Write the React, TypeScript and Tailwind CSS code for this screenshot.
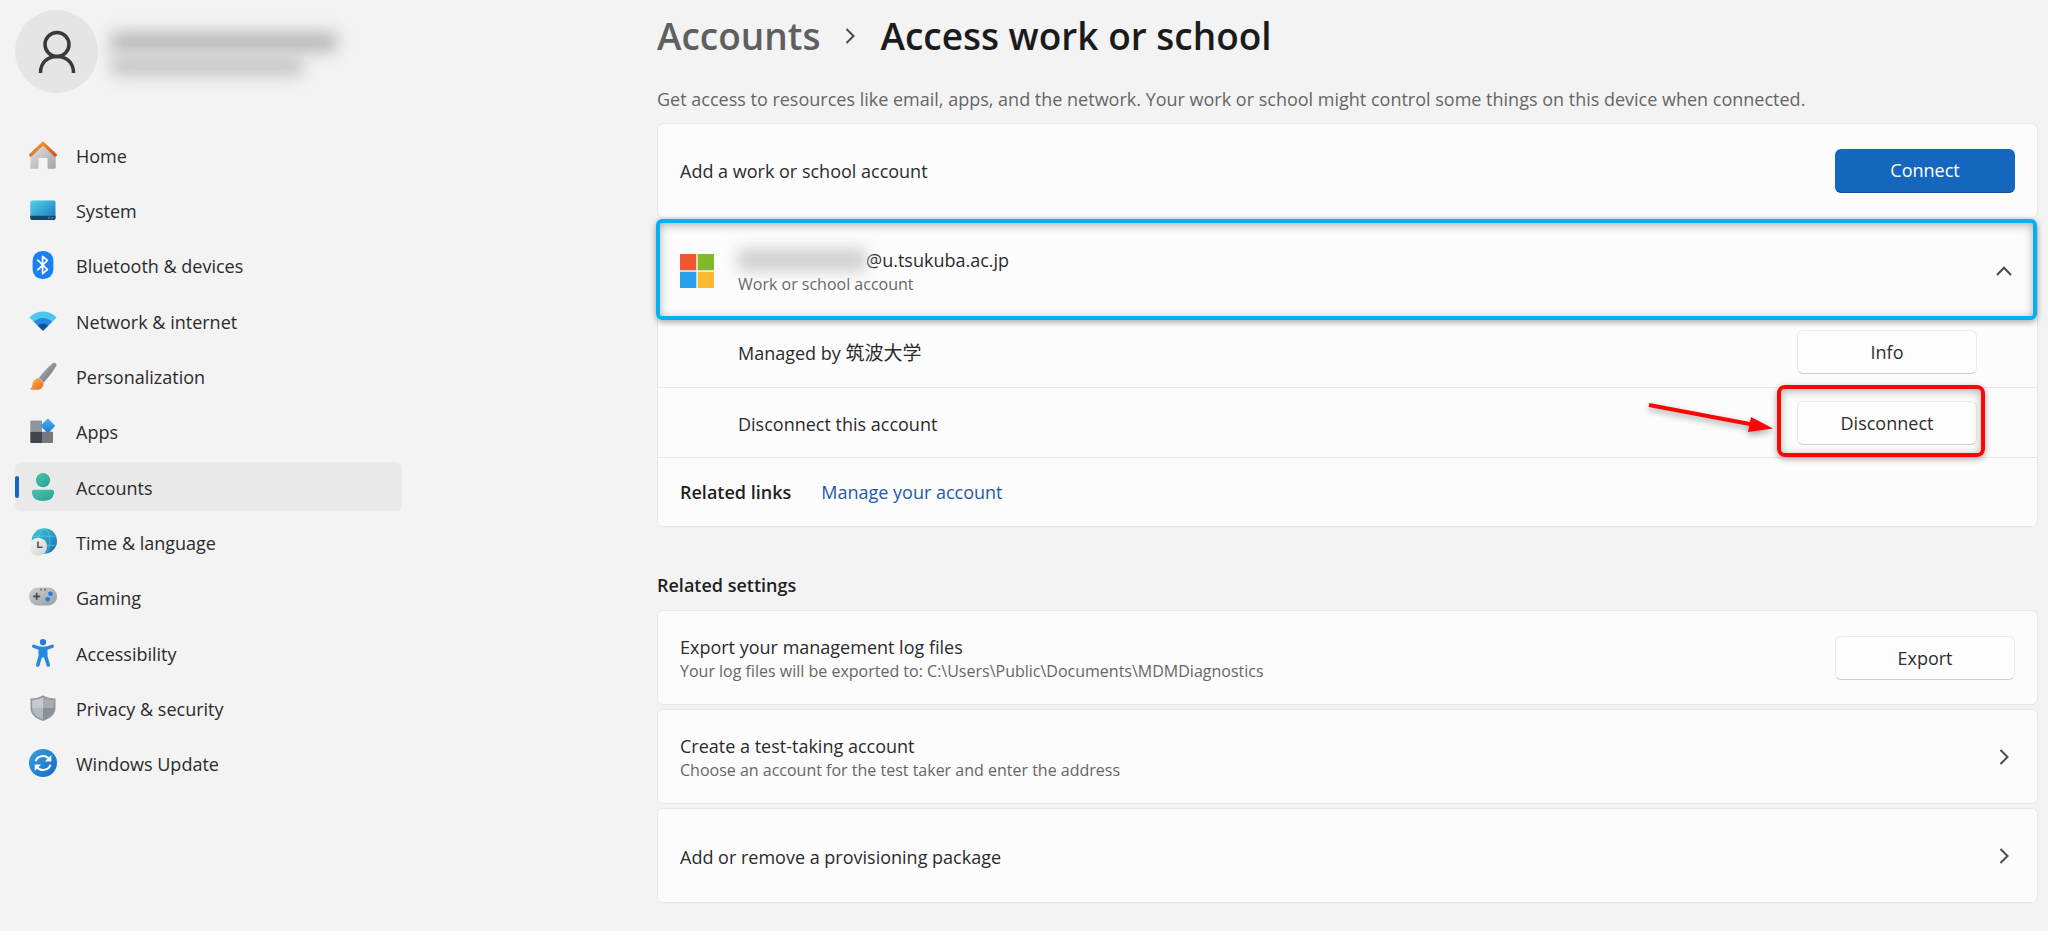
import type { ReactNode } from "react";

const HomeIcon = () => (
    <svg viewBox="0 0 28 28" className="w-7 h-7">
        <defs>
            <linearGradient id="homeBody" x1="0" y1="0" x2="1" y2="1">
                <stop offset="0" stopColor="#e4e4e4" />
                <stop offset="1" stopColor="#a3a3a3" />
            </linearGradient>
            <linearGradient id="homeRoof" x1="0" y1="0" x2="1" y2="1">
                <stop offset="0" stopColor="#f2a331" />
                <stop offset="1" stopColor="#d8501c" />
            </linearGradient>
        </defs>
        <path
            d="M14 3.500L1.300 14.500V26.400c0 .9.6 1.400 1.400 1.400h5.800c.6 0 1-.4 1-1v-9.900h9v9.900c0 .6.4 1 1 1h5.800c.8 0 1.400-.5 1.400-1.400V14.500z"
            fill="url(#homeBody)"
        />
        <path
            d="M1.700 14L14 2.300 26.300 14"
            fill="none"
            stroke="url(#homeRoof)"
            strokeWidth="3.200"
            strokeLinecap="round"
            strokeLinejoin="round"
        />
    </svg>
);

const SystemIcon = () => (
    <svg viewBox="0 0 28 28" className="w-7 h-7">
        <defs>
            <linearGradient id="sysScreen" x1="0" y1="0" x2="1" y2="1">
                <stop offset="0" stopColor="#4fd3e6" />
                <stop offset="1" stopColor="#1b74c5" />
            </linearGradient>
        </defs>
        <rect x="1.3" y="4.5" width="25.2" height="19.6" rx="2" fill="url(#sysScreen)" />
        <path d="M1.3 19.8h25.2v2.3a2 2 0 0 1-2 2H3.300a2 2 0 0 1-2-2z" fill="#14496f" />
        <path d="M19.500 21.900h1.300M22.500 21.900h1.300" stroke="#7fb2d4" strokeWidth="1.200" />
    </svg>
);

const BluetoothIcon = () => (
    <svg viewBox="0 0 28 28" className="w-7 h-7">
        <rect x="3.600" y="0" width="20.800" height="28" rx="9.500" fill="#1a80f5" />
        <path
            d="M8.800 9.200l9.600 9.400-4.800 4V5.400l4.800 4-9.600 9.400"
            fill="none"
            stroke="#fff"
            strokeWidth="1.700"
            strokeLinejoin="round"
            strokeLinecap="round"
        />
    </svg>
);

const NetworkIcon = () => (
    <svg viewBox="0 0 28 28" className="w-7 h-7">
        <path d="M14 23.800L.4 10.400C8 2.500 20 2.500 27.600 10.400z" fill="#4cc8ee" />
        <path d="M14 23.800L4.900 14.800c5-5.200 13.200-5.200 18.200 0z" fill="#2788dd" />
        <path d="M14 23.800L8.900 18.700c2.900-2.900 7.300-2.900 10.200 0z" fill="#154f9f" />
    </svg>
);

const PersonalizationIcon = () => (
    <svg viewBox="0 0 28 28" className="w-7 h-7">
        <defs>
            <linearGradient id="brushHandle" x1="0" y1="0" x2="1" y2="1">
                <stop offset="0" stopColor="#b4babf" />
                <stop offset="1" stopColor="#666c73" />
            </linearGradient>
            <linearGradient id="brushTip" x1="0" y1="0" x2="1" y2="1">
                <stop offset="0" stopColor="#fdbe4b" />
                <stop offset="1" stopColor="#e8621c" />
            </linearGradient>
        </defs>
        <path
            d="M23.600 1.200c2-1.600 4.900.6 3.600 2.900-3.400 5.600-7.800 11.300-12.400 16.300l-5-4.400C14 10.800 18.600 5.200 23.600 1.200z"
            fill="url(#brushHandle)"
        />
        <path
            d="M9.800 16.200l4.700 4.200c.5 3.200-1.700 7.300-6.500 7.400-2.600.2-5.600 0-7.500-.9 2.100-.6 2.600-2 2.800-4 .4-4.200 3.300-6.700 6.500-6.700z"
            fill="url(#brushTip)"
        />
    </svg>
);

const AppsIcon = () => (
    <svg viewBox="0 0 28 28" className="w-7 h-7">
        <defs>
            <linearGradient id="appsDiamond" x1="0" y1="0" x2="1" y2="1">
                <stop offset="0" stopColor="#47b7f3" />
                <stop offset="1" stopColor="#1977d4" />
            </linearGradient>
        </defs>
        <rect x="1.300" y="3.600" width="11.700" height="11.200" fill="#8e959c" />
        <path d="M1.300 14.800H13V26H2.300a1 1 0 0 1-1-1z" fill="#42464a" />
        <path d="M13 14.800h11V25a1 1 0 0 1-1 1H13z" fill="#74797f" />
        <rect x="13.600" y="3.600" width="10.600" height="10.600" rx="1" transform="rotate(45 18.900 8.900)" fill="url(#appsDiamond)" />
    </svg>
);

const AccountsIcon = () => (
    <svg viewBox="0 0 28 28" className="w-7 h-7">
        <defs>
            <linearGradient id="accFill" x1="0" y1="0" x2="1" y2="1">
                <stop offset="0" stopColor="#44c5b0" />
                <stop offset="1" stopColor="#2ba18f" />
            </linearGradient>
        </defs>
        <circle cx="14" cy="7.200" r="7.100" fill="url(#accFill)" />
        <path
            d="M5.200 16.800h17.600c1.300 0 2.300 1 2.300 2.200 0 5.800-4.700 9-11.100 9S2.900 24.800 2.900 19c0-1.200 1-2.200 2.300-2.200z"
            fill="url(#accFill)"
        />
    </svg>
);

const TimeIcon = () => (
    <svg viewBox="0 0 28 28" className="w-7 h-7">
        <defs>
            <linearGradient id="globe" x1="0" y1="0" x2="1" y2="1">
                <stop offset="0" stopColor="#3fd0d6" />
                <stop offset="1" stopColor="#1767b8" />
            </linearGradient>
            <linearGradient id="clock" x1="0" y1="0" x2="1" y2="1">
                <stop offset="0" stopColor="#fafafa" />
                <stop offset="1" stopColor="#cfcfcf" />
            </linearGradient>
        </defs>
        <circle cx="15.300" cy="13" r="12.700" fill="url(#globe)" />
        <g fill="none" stroke="#6fd9ec" strokeWidth="0.900" opacity="0.600">
            <ellipse cx="15.300" cy="13" rx="5.600" ry="12.500" />
            <path d="M4.200 8.200h22.200M4 17.300h22.400" />
        </g>
        <circle cx="9.200" cy="18.700" r="9" fill="url(#clock)" />
        <path d="M9 13.600v5.600h4.500" fill="none" stroke="#555" strokeWidth="1.600" />
    </svg>
);

const GamingIcon = () => (
    <svg viewBox="0 0 28 28" className="w-7 h-7">
        <defs>
            <linearGradient id="pad" x1="0" y1="0" x2="1" y2="1">
                <stop offset="0" stopColor="#cdd1d5" />
                <stop offset="1" stopColor="#989da3" />
            </linearGradient>
        </defs>
        <rect x="0" y="4.500" width="28" height="18" rx="8.500" fill="url(#pad)" />
        <path d="M7.700 9.800v7M4.200 13.300h7" stroke="#484c50" strokeWidth="1.800" />
        <path d="M11.200 6.600h1.600M15.200 6.600h1.600" stroke="#5c6166" strokeWidth="1.600" />
        <circle cx="21.500" cy="10.800" r="2.300" fill="#1f7fdc" />
        <circle cx="18.700" cy="16.200" r="2.300" fill="#1f7fdc" />
    </svg>
);

const AccessibilityIcon = () => (
    <svg viewBox="0 0 28 28" className="w-7 h-7">
        <g fill="none" stroke="#2389de" strokeLinecap="round" strokeLinejoin="round">
            <path d="M4.600 7.200c5.600 2.700 13.200 2.700 18.800 0" strokeWidth="3.200" />
            <path d="M11.300 10v7.300L8.800 26M16.700 10v7.300l2.500 8.700" strokeWidth="3.600" />
        </g>
        <path d="M10.500 9h7v9.500h-7z" fill="#2389de" />
        <circle cx="14" cy="3.200" r="3.100" fill="#1f7fd6" />
    </svg>
);

const PrivacyIcon = () => (
    <svg viewBox="0 0 28 28" className="w-7 h-7">
        <path
            d="M14 1.200c3.600 2.200 8 3.200 12.500 3.200v9.300c0 6.700-5 10.800-12.500 13.200C6.500 24.500 1.500 20.400 1.500 13.700V4.400C6 4.400 10.400 3.400 14 1.200z"
            fill="#92979d"
        />
        <path d="M14 3.200c3.300 1.800 7 2.700 10.800 2.800V14H14z" fill="#a8adb2" />
        <path d="M14 3.200C10.700 5 7 5.900 3.200 6V14H14z" fill="#c6c9cd" />
        <path d="M3.200 14c0 5.600 4.200 9 10.800 11.200V14z" fill="#b5b9be" />
        <path d="M24.800 14c0 5.600-4.200 9-10.800 11.200V14z" fill="#8a9096" />
    </svg>
);

const UpdateIcon = () => (
    <svg viewBox="0 0 28 28" className="w-7 h-7">
        <defs>
            <linearGradient id="upd" x1="0" y1="0" x2="1" y2="1">
                <stop offset="0" stopColor="#33a0e6" />
                <stop offset="1" stopColor="#1769c6" />
            </linearGradient>
        </defs>
        <circle cx="14" cy="14" r="14" fill="url(#upd)" />
        <g fill="none" stroke="#fff" strokeWidth="2">
            <path d="M6.600 12.200c1.600-5.700 9.600-7 13.600-2.200" />
            <path d="M21.400 15.800c-1.600 5.700-9.600 7-13.600 2.200" />
        </g>
        <path d="M22.300 6v6.400h-6.400zM5.700 22v-6.400h6.400z" fill="#fff" />
    </svg>
);

const ChevronRight = () => (
    <svg viewBox="0 0 16 16" fill="none" stroke="#4a4a4a" strokeWidth="2" className="w-4 h-4">
        <path d="M4.500 1l7 7-7 7" />
    </svg>
);

const ChevronUp = () => (
    <svg viewBox="0 0 16 16" fill="none" stroke="#4a4a4a" strokeWidth="2" className="w-4 h-4">
        <path d="M1 12l7-7.200 7 7.200" />
    </svg>
);

const navItems = [
    { label: "Home", icon: <HomeIcon /> },
    { label: "System", icon: <SystemIcon /> },
    { label: "Bluetooth & devices", icon: <BluetoothIcon /> },
    { label: "Network & internet", icon: <NetworkIcon /> },
    { label: "Personalization", icon: <PersonalizationIcon /> },
    { label: "Apps", icon: <AppsIcon /> },
    { label: "Accounts", icon: <AccountsIcon /> },
    { label: "Time & language", icon: <TimeIcon /> },
    { label: "Gaming", icon: <GamingIcon /> },
    { label: "Accessibility", icon: <AccessibilityIcon /> },
    { label: "Privacy & security", icon: <PrivacyIcon /> },
    { label: "Windows Update", icon: <UpdateIcon /> },
];

function Button({ children }: { children: ReactNode }) {
    return (
        <button className="w-[180px] h-11 rounded-md border border-[#ebebeb] border-b-[#cfcfcf] bg-[#fdfdfd] text-[#2e2e2e]">
            {children}
        </button>
    );
}

function Sidebar() {
    const active = "Accounts";

    return (
        <aside className="w-[402px] shrink-0 pl-[15px] pt-[10px]">
            <div className="flex items-center gap-3">
                <div className="w-[83px] h-[83px] rounded-full bg-[#e5e5e5] flex items-center justify-center">
                    <svg
                        viewBox="0 0 40 44"
                        fill="none"
                        stroke="#3a3a3a"
                        strokeWidth="3.500"
                        className="w-10 h-11"
                    >
                        <circle cx="20" cy="14.500" r="12" />
                        <path d="M3.500 43c0-10.500 7-16.500 16.500-16.500S36.500 32.500 36.500 43" />
                    </svg>
                </div>
                {/* name and mail are hidden */}
                <div className="flex flex-col gap-1 pt-1">
                    <div className="w-[228px] h-5 rounded-lg bg-[#b8b8b8] blur-[8px]"></div>
                    <div className="w-[194px] h-5 rounded-lg bg-[#c6c6c6] blur-[8px]"></div>
                </div>
            </div>

            <nav className="mt-[37px] h-[658px] flex flex-col justify-between">
                {navItems.map((item) => (
                    <a
                        key={item.label}
                        href="#"
                        className={`relative h-[49px] pl-[14px] flex items-center gap-[19px] rounded-md ${
                            item.label === active ? "bg-[#e9e9e9]" : ""
                        }`}
                    >
                        {item.label === active && (
                            <span className="absolute left-0 w-1 h-[22px] rounded-full bg-[#1467c0]"></span>
                        )}
                        {item.icon}
                        <span className="pt-0.5">{item.label}</span>
                    </a>
                ))}
            </nav>
        </aside>
    );
}

function App() {
    return (
        <div className="min-h-screen flex bg-[#f3f3f3] text-[#2b2b2b] text-[18px] leading-6 font-['Open_Sans','Noto_Sans_CJK_JP',sans-serif]">
            <Sidebar />

            <main className="flex-1 min-w-0 pl-[255px] pr-[10px] pt-3">
                <h1 className="flex items-center text-[37px] leading-[48px] font-semibold text-[#1b1b1b]">
                    <a href="#" className="text-[#5f5f5f]">
                        Accounts
                    </a>
                    <span className="mx-[22px]">
                        <ChevronRight />
                    </span>
                    Access work or school
                </h1>
                <p className="mt-[27px] text-[#666666]">
                    Get access to resources like email, apps, and the network. Your work or
                    school might control some things on this device when connected.
                </p>

                <div className="mt-3 h-[95px] px-[22px] flex items-center justify-between bg-[#fcfcfc] border border-[#e7e7e7] rounded-md">
                    <span>Add a work or school account</span>
                    <button className="w-[180px] h-11 rounded-md border-b border-[#0f4f98] bg-[#1567be] text-white">
                        Connect
                    </button>
                </div>

                <section className="mt-1 bg-[#fcfcfc] border border-[#e7e7e7] rounded-md">
                    <div className="relative h-[94px] pl-[22px] pr-[25px] pt-0.5 flex items-center">
                        <div className="absolute -left-[2px] right-0 -top-1 -bottom-[3px] border-4 border-[#06b0ee] rounded-md shadow-[0_2px_6px_rgba(0,0,0,0.35),inset_0_2px_10px_rgba(0,0,0,0.3)] pointer-events-none"></div>
                        <svg viewBox="0 0 34 34" className="w-[34px] h-[34px] mr-6">
                            <rect width="16.300" height="16.300" fill="#f0562f" />
                            <rect x="17.700" width="16.300" height="16.300" fill="#82b92c" />
                            <rect y="17.700" width="16.300" height="16.300" fill="#27a1ed" />
                            <rect x="17.700" y="17.700" width="16.300" height="16.300" fill="#fcb932" />
                        </svg>
                        <div className="flex-1 pt-0.5">
                            <div className="flex items-center">
                                <span className="w-32 h-6 bg-[#d2d2d2] blur-[7px]"></span>
                                <span>@u.tsukuba.ac.jp</span>
                            </div>
                            <p className="text-[16px] text-[#666666]">Work or school account</p>
                        </div>
                        <button aria-label="Collapse">
                            <ChevronUp />
                        </button>
                    </div>
                    <div className="h-[70px] pl-20 pr-[60px] flex items-center justify-between">
                        <span className="pt-0.5">
                            Managed by <span className="text-[19px]">筑波大学</span>
                        </span>
                        <Button>Info</Button>
                    </div>
                    <div className="h-[70px] pl-20 pr-[60px] flex items-center justify-between border-t border-[#e7e7e7]">
                        <span className="pt-0.5">Disconnect this account</span>
                        <div className="relative">
                            <Button>Disconnect</Button>
                            <div className="absolute -left-5 -right-2 -top-4 -bottom-3 border-4 border-[#fb0505] rounded-lg shadow-[0_2px_6px_rgba(0,0,0,0.35),inset_0_2px_10px_rgba(0,0,0,0.3)] pointer-events-none"></div>
                            <svg
                                viewBox="0 0 130 40"
                                className="absolute right-[202px] top-0 w-[130px] h-10 drop-shadow-[0_3px_3px_rgba(0,0,0,0.35)]"
                            >
                                <path d="M4 4L110 24" stroke="#fb0505" strokeWidth="4" />
                                <path d="M106 16L128 27.500 103 31z" fill="#fb0505" />
                            </svg>
                        </div>
                    </div>
                    <div className="h-[69px] pl-[22px] flex items-center gap-[30px] border-t border-[#e7e7e7]">
                        <span className="font-semibold text-[#1f1f1f]">Related links</span>
                        <a href="#" className="text-[#1f5aa8]">
                            Manage your account
                        </a>
                    </div>
                </section>

                <h2 className="mt-[46px] mb-[13px] font-semibold text-[#1f1f1f]">
                    Related settings
                </h2>

                <div className="flex flex-col gap-1">
                    <div className="h-[95px] px-[22px] flex items-center justify-between bg-[#fcfcfc] border border-[#e7e7e7] rounded-md">
                        <div className="pt-0.5">
                            <p>Export your management log files</p>
                            <p className="text-[16px] text-[#666666]">
                                Your log files will be exported to:
                                C:\Users\Public\Documents\MDMDiagnostics
                            </p>
                        </div>
                        <Button>Export</Button>
                    </div>
                    <a
                        href="#"
                        className="h-[95px] pl-[22px] pr-[25px] flex items-center justify-between bg-[#fcfcfc] border border-[#e7e7e7] rounded-md"
                    >
                        <div className="pt-0.5">
                            <p>Create a test-taking account</p>
                            <p className="text-[16px] text-[#666666]">
                                Choose an account for the test taker and enter the address
                            </p>
                        </div>
                        <ChevronRight />
                    </a>
                    <a
                        href="#"
                        className="h-[95px] pl-[22px] pr-[25px] flex items-center justify-between bg-[#fcfcfc] border border-[#e7e7e7] rounded-md"
                    >
                        <span className="pt-0.5">Add or remove a provisioning package</span>
                        <ChevronRight />
                    </a>
                </div>
            </main>
        </div>
    );
}

export default App;
